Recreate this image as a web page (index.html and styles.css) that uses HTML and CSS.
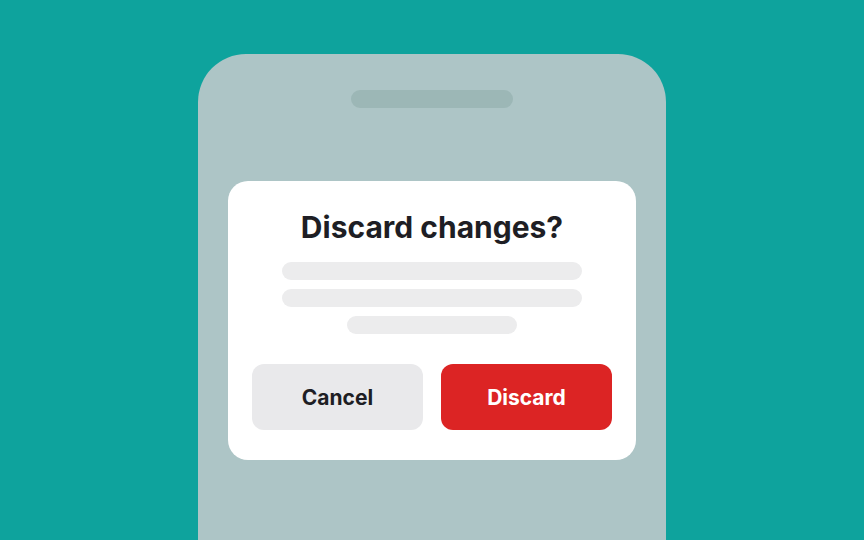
FILE: index.html
```html
<!DOCTYPE html>
<html>
<head>
<meta charset="utf-8">
<link rel="stylesheet" href="styles.css">
</head>
<body>
<div class="stage">
  <div class="phone">
    <div class="notch"></div>
    <div class="dialog">
      <h1 class="title">Discard changes?</h1>
      <div class="lines">
        <div class="line line-full"></div>
        <div class="line line-full"></div>
        <div class="line line-short"></div>
      </div>
      <div class="actions">
        <button class="btn btn-cancel">Cancel</button>
        <button class="btn btn-discard">Discard</button>
      </div>
    </div>
  </div>
</div>
</body>
</html>
```
FILE: styles.css
```css
html, body {
  margin: 0;
  padding: 0;
}
body {
  width: 864px;
  height: 540px;
  overflow: hidden;
  background: #0ea39d;
  font-family: Inter, "Liberation Sans", sans-serif;
}
.stage {
  display: flex;
  justify-content: center;
  padding-top: 54px;
}
.phone {
  width: 468px;
  height: 486px;
  background: #adc5c6;
  border-radius: 48px 48px 0 0;
  display: flex;
  flex-direction: column;
  align-items: center;
  padding-top: 36px;
  box-sizing: border-box;
}
.notch {
  width: 162px;
  height: 18px;
  border-radius: 9px;
  background: #9cb7b6;
}
.dialog {
  margin-top: 73px;
  width: 408px;
  box-sizing: border-box;
  background: #ffffff;
  border-radius: 20px;
  padding: 29px 24px 30px;
  display: flex;
  flex-direction: column;
  align-items: center;
}
.title {
  margin: 0;
  font-size: 30px;
  line-height: 34px;
  font-weight: 700;
  color: #1e1e24;
}
.lines {
  margin-top: 18px;
  display: flex;
  flex-direction: column;
  align-items: center;
  gap: 9px;
}
.line {
  height: 18px;
  border-radius: 9px;
  background: #ececed;
}
.line-full { width: 300px; }
.line-short { width: 170px; }
.actions {
  margin-top: 30px;
  width: 100%;
  display: grid;
  grid-template-columns: 1fr 1fr;
  gap: 18px;
}
.btn {
  height: 66px;
  border: none;
  border-radius: 12px;
  font-family: Inter, "Liberation Sans", sans-serif;
  font-size: 21px;
  font-weight: 700;
  padding: 0;
}
.btn-cancel {
  background: #e9e9eb;
  color: #1e1e24;
}
.btn-discard {
  background: #dc2424;
  color: #ffffff;
}
```
